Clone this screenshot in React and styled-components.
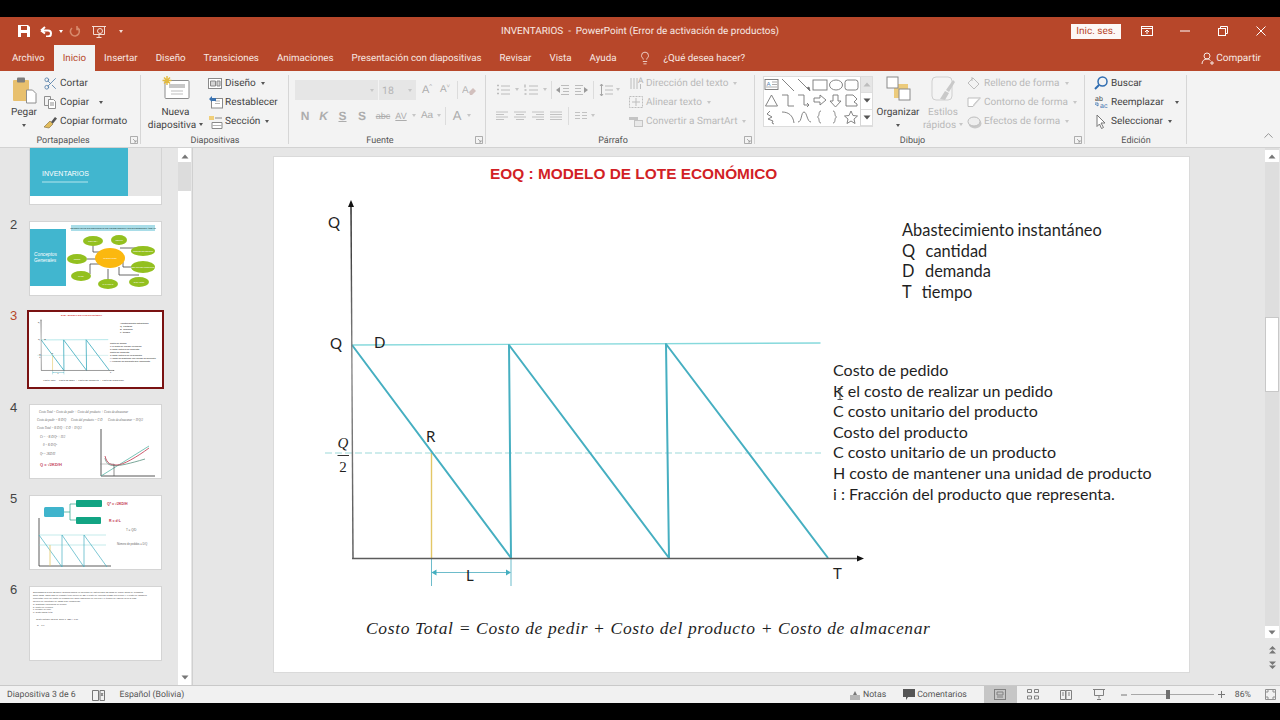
import React from "react";
import styled, { createGlobalStyle } from "styled-components";
import { Scissors, Lightbulb, ChevronUp } from "lucide-react";

const RUST = "#b7472a";
const UI_FONT = 'Roboto, "Noto Sans", sans-serif';

const GlobalStyle = createGlobalStyle`
  html, body { margin: 0; padding: 0; background: #000; }
  body { font-family: ${UI_FONT}; }
  * { box-sizing: border-box; }
  header, nav, section, footer { text-rendering: geometricPrecision; }
`;

const Screen = styled.div`
  width: 1280px;
  height: 720px;
  display: flex;
  flex-direction: column;
  background: #000;
  overflow: hidden;
`;

const Letterbox = styled.div`
  height: 17px;
  flex: none;
  background: #000;
`;

/* title bar */
const TitleBar = styled.header`
  height: 28px;
  flex: none;
  display: grid;
  grid-template-columns: 1fr auto 1fr;
  align-items: center;
  background: ${RUST};
  color: #f7e9e4;
`;

const QuickAccess = styled.div`
  display: flex;
  align-items: center;
  padding-left: 18px;
  gap: 6px;
`;

const WindowTitle = styled.div`
  font-size: 9.95px;
  white-space: pre;
`;

const WindowControls = styled.div`
  display: flex;
  align-items: center;
  justify-content: flex-end;
`;

const SignIn = styled.div`
  width: 50px;
  height: 15px;
  margin-right: 7px;
  background: #fdf8f6;
  color: ${RUST};
  font-size: 10px;
  line-height: 15px;
  text-align: center;
`;

const WinButton = styled.div`
  width: 38px;
  display: flex;
  justify-content: center;
`;

/* tabs */
const TabRow = styled.nav`
  height: 26px;
  flex: none;
  display: flex;
  align-items: flex-end;
  padding-left: 3px;
  background: ${RUST};
`;

const Tab = styled.div`
  height: 26px;
  padding: 0 9px;
  font-size: 9.75px;
  line-height: 27px;
  white-space: nowrap;
  color: ${(p) => (p.$active ? RUST : "#f7e9e4")};
  background: ${(p) => (p.$active ? "#f3f3f3" : "transparent")};
`;

const TellMe = styled.div`
  display: flex;
  align-items: center;
  height: 26px;
  margin-left: 13px;
  gap: 3px;
  font-size: 9.75px;
  color: #f7e9e4;
`;

const Share = styled.div`
  margin-left: auto;
  margin-right: 19px;
  height: 26px;
  display: flex;
  align-items: center;
  gap: 2px;
  font-size: 10px;
  color: #f7e9e4;
`;

/* ribbon */
const Ribbon = styled.section`
  height: 77px;
  flex: none;
  display: flex;
  position: relative;
  background: #f3f3f3;
  border-bottom: 1px solid #d2d2d2;
  color: #444;
`;

const Group = styled.div`
  width: ${(p) => p.$w}px;
  flex: none;
  display: flex;
  flex-direction: column;
  position: relative;
  margin-top: 2.5px;

  &::after {
    content: "";
    position: absolute;
    right: 0;
    top: 1px;
    bottom: 3px;
    width: 1px;
    background: #d6d6d6;
  }
`;

const GroupBody = styled.div`
  flex: 1;
  display: flex;
  padding-left: ${(p) => p.$pad || 0}px;
  gap: ${(p) => p.$gap || 0}px;
`;

const GroupLabel = styled.div`
  height: 13px;
  position: relative;
  padding-right: ${(p) => (p.$launch ? 15 : 0)}px;
  font-size: 9px;
  line-height: 14px;
  text-align: center;
  color: #555;
`;

const Launcher = styled.svg`
  position: absolute;
  right: 3px;
  top: 2px;
`;

const LargeButton = styled.div`
  width: ${(p) => p.$w}px;
  flex: none;
  display: flex;
  flex-direction: column;
  align-items: center;
  font-size: 10px;
  line-height: 13px;
  white-space: nowrap;
  color: ${(p) => (p.$off ? "#b9b9b9" : "#444")};
`;

const LargeIcon = styled.div`
  height: 32px;
  padding-top: 2px;
  display: flex;
  align-items: flex-start;
  justify-content: center;
`;

const Stack = styled.div`
  display: flex;
  flex-direction: column;
  width: ${(p) => (p.$w ? `${p.$w}px` : "auto")};
  margin-left: ${(p) => p.$left || 0}px;
  flex: none;
`;

const SmallButton = styled.div`
  height: 19.3px;
  display: flex;
  align-items: center;
  gap: 2px;
  font-size: 10px;
  white-space: nowrap;
  color: ${(p) => (p.$off ? "#b9b9b9" : "#444")};
`;

const IconSlot = styled.span`
  width: ${(p) => p.$w || 16}px;
  flex: none;
  display: flex;
  justify-content: center;
`;

const Caret = styled.span`
  display: inline-block;
  flex: none;
  width: 0;
  height: 0;
  margin-left: ${(p) => p.$gap ?? 3}px;
  margin-top: ${(p) => p.$top || 0}px;
  vertical-align: middle;
  border-left: 2.5px solid transparent;
  border-right: 2.5px solid transparent;
  border-top: 3px solid ${(p) => p.$color || (p.$off ? "#c6c6c6" : "#555")};
`;

const ComboRow = styled.div`
  display: flex;
  align-items: center;
  height: 28px;
  padding-top: 5px;
`;

const Combo = styled.div`
  width: ${(p) => p.$w}px;
  height: 20px;
  display: flex;
  align-items: center;
  justify-content: space-between;
  padding: 0 4px 0 3px;
  background: #e6e6e6;
  border-right: 1px solid #f3f3f3;
  color: #b5b5b5;
  font-size: 10.5px;
`;

const ToolRow = styled.div`
  display: flex;
  align-items: center;
  height: ${(p) => p.$h || 22}px;
  margin-top: ${(p) => p.$top || 0}px;
  color: #b0b0b0;
`;

const Tool = styled.span`
  width: ${(p) => p.$w}px;
  flex: none;
  text-align: center;
  font-family: "Liberation Sans", sans-serif;
  font-size: ${(p) => p.$size || 12}px;
  font-weight: ${(p) => (p.$bold ? 700 : 400)};
  font-style: ${(p) => (p.$italic ? "italic" : "normal")};
  text-decoration: ${(p) => p.$deco || "none"};
  color: #adadad;
`;

const ToolMark = styled.sup`
  font-size: 6px;
`;

const ToolDivider = styled.span`
  width: 1px;
  height: 18px;
  flex: none;
  margin: 0 ${(p) => p.$m || 5}px;
  background: #dcdcdc;
`;

const ToolSpace = styled.span`
  width: ${(p) => p.$w}px;
  flex: none;
`;

const Collapse = styled.div`
  position: absolute;
  right: 4px;
  bottom: 0;
  color: #777;
`;

const Gallery = styled.div`
  width: 110px;
  height: 51px;
  margin-top: 2.5px;
  display: flex;
  flex: none;
  background: #fff;
  border: 1px solid #dcdcdc;
`;

const GalleryScroll = styled.div`
  width: 12px;
  margin-left: auto;
  display: flex;
  flex-direction: column;
  border-left: 1px solid #d6d6d6;
`;

const GalleryStep = styled.div`
  flex: 1;
  display: flex;
  align-items: center;
  justify-content: center;
  background: ${(p) => (p.$off ? "#e6e6e6" : "#fff")};
  border-bottom: 1px solid #dedede;
`;

/* workspace */
const Workspace = styled.main`
  flex: 1;
  min-height: 0;
  display: flex;
  background: #e6e6e6;
`;

const ThumbPane = styled.aside`
  width: 178px;
  flex: none;
  overflow: hidden;
`;

const ThumbList = styled.div`
  display: flex;
  flex-direction: column;
  gap: 18.4px;
  margin-top: -17.5px;
`;

const ThumbRow = styled.div`
  display: flex;
  height: 73px;
  padding-left: 10px;
`;

const ThumbNumber = styled.div`
  width: 20px;
  height: 16px;
  margin-top: -5px;
  font-size: 13px;
  line-height: 16px;
  font-family: "Liberation Sans", sans-serif;
  color: ${(p) => (p.$on ? RUST : "#444")};
`;

const Thumb = styled.div`
  width: 131px;
  height: 73px;
  position: relative;
  overflow: hidden;
  background: #fff;
  box-shadow: 0 0 0 1px #d4d4d4;
`;

const ThumbSelected = styled(Thumb)`
  box-shadow: 0 0 0 1px #fff, 0 0 0 3px #7a1212;
`;

const ThumbScale = styled.div`
  width: 915px;
  height: 515px;
  transform: scale(0.1432);
  transform-origin: 0 0;
`;

const ThumbArt = styled.svg`
  display: block;
  font-family: "Liberation Sans", sans-serif;
`;

const VBar = styled.div`
  width: ${(p) => p.$w || 13}px;
  flex: none;
  display: flex;
  flex-direction: column;
  padding-top: 2px;
  background: ${(p) => p.$track};
`;

const VButton = styled.div`
  height: 12px;
  flex: none;
  margin-bottom: ${(p) => p.$bottom || 0}px;
  display: flex;
  align-items: center;
  justify-content: center;
  background: ${(p) => p.$bg || "#fff"};
`;

const VSpace = styled.div`
  height: ${(p) => p.$h}px;
  flex: ${(p) => (p.$h ? "none" : 1)};
  background: ${(p) => p.$bg || "transparent"};
  border: ${(p) => p.$line || "none"};
`;

const PaneGap = styled.div`
  width: ${(p) => p.$w || 2}px;
  flex: none;
  border-right: ${(p) => (p.$line ? "1px solid #d0d0d0" : "none")};
`;

const Editor = styled.div`
  flex: 1;
  padding: 9px 0 0 81px;
`;

const Slide = styled.div`
  width: 915px;
  height: 515px;
  position: relative;
  background: #fff;
  color: #1f1f1f;
`;

const SlideFrame = styled(Slide)`
  box-shadow: 0 0 0 1px #dadada;
`;

const SlideCanvas = styled.svg`
  position: absolute;
  left: 0;
  top: 0;
  font-family: Lato, sans-serif;
`;

const SlideHeading = styled.div`
  position: absolute;
  left: 216px;
  top: 7px;
  font-family: "Liberation Sans", sans-serif;
  font-size: 15.4px;
  line-height: 20px;
  font-weight: 700;
  white-space: nowrap;
  color: #d21f26;
`;

const NoteBlock = styled.div`
  position: absolute;
  left: ${(p) => p.$x}px;
  top: ${(p) => p.$y}px;
  font-family: Lato, sans-serif;
  font-size: ${(p) => p.$size}px;
  line-height: 20.6px;
  word-spacing: ${(p) => p.$words || 0}px;
  white-space: pre;
`;

const Formula = styled.div`
  position: absolute;
  left: 92px;
  top: 460px;
  font-family: "Liberation Serif", serif;
  font-style: italic;
  font-size: 17.5px;
  line-height: 22px;
  letter-spacing: 0.64px;
  white-space: pre;
`;

const TextCursor = styled.svg`
  position: absolute;
  left: 562px;
  top: 231px;
`;

/* status bar */
const StatusBar = styled.footer`
  height: 18px;
  flex: none;
  display: flex;
  align-items: center;
  padding-left: 7px;
  background: #f1f1f1;
  border-top: 1px solid #c9c9c9;
  color: #555;
  font-size: 8.7px;
  white-space: nowrap;
`;

const StatusItem = styled.div`
  display: flex;
  align-items: center;
  gap: ${(p) => p.$gap || 0}px;
  margin-left: ${(p) => p.$left || 0}px;
`;

const StatusRight = styled.div`
  margin-left: auto;
  margin-right: 4px;
  display: flex;
  align-items: center;
  height: 100%;
`;

const ViewButton = styled.div`
  width: ${(p) => p.$w}px;
  height: 17px;
  margin-left: ${(p) => p.$left || 0}px;
  display: flex;
  align-items: center;
  justify-content: center;
  background: ${(p) => (p.$on ? "#c6c6c6" : "transparent")};
`;

const ZoomTrack = styled.div`
  width: 83px;
  height: 1px;
  position: relative;
  margin: 0 4px;
  background: #a8a8a8;
`;

const ZoomThumb = styled.span`
  position: absolute;
  left: 35px;
  top: -4px;
  width: 4px;
  height: 9px;
  background: #707070;
`;

const Icon = ({ w = 16, h = 16, vb, children, ...rest }) => (
  <svg width={w} height={h} viewBox={vb || `0 0 ${w} ${h}`} fill="none" {...rest}>
    {children}
  </svg>
);

const GroupTitle = ({ children, launch }) => (
  <GroupLabel $launch={launch}>
    {children}
    {launch && (
      <Launcher width="8" height="8" viewBox="0 0 8 8" fill="none" stroke="#9a9a9a" strokeWidth="0.8">
        <path d="M.5.5h7v7h-7zM3 3l3 3M6 4v2H4" />
      </Launcher>
    )}
  </GroupLabel>
);

const Paste = () => (
  <Icon w={25} h={28}>
    <rect x="1" y="4" width="16" height="21" rx="1" fill="#e8c06e" />
    <rect x="5" y="1.500" width="8" height="5" rx="1" fill="#7d7d7d" />
    <path d="M14.500 14h6l3.500 3.500v9.500h-9.500z" fill="#fff" stroke="#8e8e8e" />
  </Icon>
);

const NewSlide = () => (
  <Icon w={28} h={24}>
    <rect x="3" y="4.500" width="24" height="18" rx="1" fill="#fff" stroke="#8c8c8c" />
    <rect x="7" y="8" width="16" height="4" fill="#c7c7c7" />
    <path d="M9 15h12M9 18h12" stroke="#bdbdbd" />
    <path d="M5 0v9M.5 4.500h9M2 1.500l6 6M8 1.500l-6 6" stroke="#e2b93f" strokeWidth="1.400" />
  </Icon>
);

const CopyIcon = () => (
  <Icon w={14} h={14} stroke="#8f8f8f">
    <path d="M1.500 1.500h6v9h-6z" fill="#f3f3f3" />
    <path d="M5.500 4.500h5l2 2v7h-7z" fill="#fff" />
    <path d="M7 8h4M7 10h4" />
  </Icon>
);

const Painter = () => (
  <Icon w={15} h={14}>
    <path d="M1 12l6-6 3 3-4 4z" fill="#e2bc5c" stroke="#7d6a3a" strokeWidth=".6" />
    <path d="M8 7l4-5 2 1.500-4 5z" fill="#555" />
  </Icon>
);

const LayoutIcon = () => (
  <Icon w={14} h={14} stroke="#8a8a8a">
    <rect x=".5" y="2.500" width="13" height="10" fill="#fff" />
    <path d="M2.500 5h5v5h-5z M9 5h3v5H9z" fill="#d6d6d6" />
  </Icon>
);

const ResetIcon = () => (
  <Icon w={15} h={14}>
    <rect x="3.500" y="3.500" width="11" height="9.500" fill="#fff" stroke="#8a8a8a" />
    <path d="M7 6h5M7 8.500h5" stroke="#b5b5b5" />
    <path d="M1 4l3-3v2h4v3H4v1z" fill="#3a72b0" />
  </Icon>
);

const SectionIcon = () => (
  <Icon w={15} h={14}>
    <rect x="1" y="1" width="5" height="4" fill="#f0cf7a" />
    <path d="M7 3h7M4 7.500h10v6H4z" stroke="#8a8a8a" fill="#fff" />
    <path d="M4 10.500h10" stroke="#b5b5b5" />
  </Icon>
);

const ListIcon = ({ numbered }) => (
  <Icon w={14} h={12} stroke="#bcbcbc">
    <path d="M5 2h9M5 6h9M5 10h9" />
    <path d={numbered ? "M1 .5v3M.5 6h2M.5 10h2" : "M1 1.500h2M1 5.500h2M1 9.500h2"} strokeWidth="1.400" />
  </Icon>
);

const IndentIcon = ({ flip }) => (
  <Icon w={13} h={12} stroke="#bcbcbc" style={flip ? { transform: "scaleX(-1)" } : undefined}>
    <path d="M5 1.500h8M7 4.500h6M7 7.500h6M5 10.500h8" />
    <path d="M0 6l4-3v6z" fill="#9a9a9a" stroke="none" />
  </Icon>
);

const SpacingIcon = () => (
  <Icon w={14} h={14} stroke="#bcbcbc">
    <path d="M6 3h8M6 7h8M6 11h8" />
    <path d="M2.500 1v12M1 3l1.500-2L4 3M1 11l1.500 2L4 11" stroke="#a5a5a5" />
  </Icon>
);

const AlignIcon = ({ d }) => (
  <Icon w={12} h={10} stroke="#c2c2c2">
    <path d={d} />
  </Icon>
);

const ColumnsIcon = () => (
  <Icon w={12} h={10} stroke="#c2c2c2">
    <path d="M0 1.500h5M0 4.500h5M0 7.500h5M7 1.500h5M7 4.500h5M7 7.500h5" />
  </Icon>
);

const DirectionIcon = () => (
  <Icon w={15} h={16}>
    <path d="M2 3v11M5 3v11M8 3v11" stroke="#bcbcbc" />
    <text x="9" y="8" fontSize="8" fill="#b0b0b0" fontFamily="Liberation Sans">A</text>
    <path d="M11.500 9v5" stroke="#bcbcbc" />
  </Icon>
);

const AlignTextIcon = () => (
  <Icon w={15} h={14} stroke="#bdbdbd">
    <rect x=".5" y="1.500" width="13" height="11" strokeDasharray="2 1" />
    <path d="M3 7h8M7 3v8" />
  </Icon>
);

const SmartArtIcon = () => (
  <Icon w={15} h={14}>
    <path d="M0 2h9v3H0zM5 5h9v7H5z" fill="#c4c4c4" />
    <rect x="6" y="6" width="7" height="5" fill="#e9e9e9" />
  </Icon>
);

const ClearFormat = () => (
  <Icon w={14} h={14}>
    <text x="0" y="10" fontSize="10" fill="#b5b5b5" fontFamily="Liberation Sans">A</text>
    <path d="M7 9l4-4 3 3-4 4H8z" fill="#d2c0bd" />
  </Icon>
);

const ShapesGrid = () => (
  <Icon w={96} h={49} stroke="#777" strokeWidth="0.9">
    <g transform="translate(0 1)">
      <rect x="1" y="1.500" width="13" height="10" />
      <text x="2.500" y="8" fontSize="6" fill="#4a7ab0" stroke="none" fontFamily="Liberation Sans">A</text>
      <path d="M8 4h5M8 6.500h5M2 9h11" strokeWidth=".6" />
      <path d="M18 1l12 12M34 1l11 11" />
      <path d="M43 10l3 3-1-4z" fill="#666" />
      <rect x="49" y="2" width="14" height="10" />
      <ellipse cx="72" cy="7" rx="6.500" ry="5" />
      <rect x="81" y="2" width="13" height="10" rx="2.500" />
    </g>
    <g transform="translate(0 17)">
      <path d="M7.500 1l6 11h-12zM18 1h6v11h6M34 1h6v10h5M43 9l2 2-2 2" />
      <path d="M50 4h6V1l6 5-6 5V8h-6zM69 1h5v6h3l-5.500 6-5.500-6h3zM82 12V1h7l4 4-3 3 3 2v2z" />
    </g>
    <g transform="translate(0 33)">
      <path d="M6 1L3 4l5 3-4 2 5 2-1 2 2 1" />
      <path d="M18 2c6 0 11 3 12 11M34 12c4 0 3-10 6-10s3 10 7 10" />
      <path d="M57 1c-3 0-1 5-3.500 6 2.500 1 .5 6 3.500 6M69 1c3 0 1 5 3.500 6-2.500 1-.5 6-3.500 6" />
      <path d="M87 1l2 4.500 4.500.5-3.500 3 1 4.500-4-2.500-4 2.500 1-4.500-3.500-3 4.500-.5z" />
    </g>
  </Icon>
);

const Arrange = () => (
  <Icon w={25} h={25}>
    <rect x="8" y="8" width="14" height="14" fill="#eccb7c" />
    <rect x="1" y="1" width="11" height="11" fill="#fff" stroke="#8a8a8a" />
    <rect x="13" y="13" width="11" height="11" fill="#fff" stroke="#8a8a8a" />
  </Icon>
);

const QuickStyles = () => (
  <Icon w={24} h={26}>
    <rect x="1" y="1" width="20" height="23" rx="4" fill="#f4f4f4" stroke="#cfcfcf" />
    <path d="M9 23l5-8 4 2-4 7zM15 14l7-10 2 2-6 10z" fill="#c9c9c9" />
  </Icon>
);

const FillIcon = () => (
  <Icon w={14} h={14} stroke="#bdbdbd">
    <path d="M6 2l6 6-5 5-6-6z" />
    <path d="M5 1v4" />
  </Icon>
);

const OutlineIcon = () => (
  <Icon w={15} h={14}>
    <path d="M1 3h12L9 7l-3 4.500H1z" stroke="#bdbdbd" fill="#fff" />
    <path d="M6 10l7-8 1 1-7 8z" fill="#cfcfcf" />
  </Icon>
);

const EffectIcon = () => (
  <Icon w={15} h={14}>
    <ellipse cx="8" cy="8.500" rx="6.500" ry="5" fill="#c9c9c9" />
    <ellipse cx="7" cy="6.500" rx="6" ry="4.500" fill="#eeeeee" stroke="#bdbdbd" />
  </Icon>
);

const FindIcon = () => (
  <Icon w={14} h={14} stroke="#2f6db1" strokeWidth="1.500">
    <circle cx="8.500" cy="5.500" r="4.500" />
    <path d="M5 9l-4 4" strokeWidth="2" />
  </Icon>
);

const ReplaceIcon = () => (
  <Icon w={15} h={14}>
    <text x="1" y="6" fontSize="7" fill="#444" fontFamily="Liberation Sans">ab</text>
    <text x="6" y="13" fontSize="7" fill="#3a72b0" fontFamily="Liberation Sans">ac</text>
    <path d="M1 8h3v3M4 11L1 9" stroke="#3a72b0" strokeWidth=".8" />
  </Icon>
);

const SelectIcon = () => (
  <Icon w={14} h={15} stroke="#777">
    <path d="M3 1l8 8H7l2.500 4.500-2 1L5.500 10 3 12.500z" fill="#fff" />
  </Icon>
);

const UpTriangle = ({ down, color = "#777" }) => (
  <Icon w={8} h={5} style={down ? { transform: "rotate(180deg)" } : undefined}>
    <path d="M4 .5L7.500 4.500H.5z" fill={color} />
  </Icon>
);

const PageJump = ({ down }) => (
  <Icon w={9} h={9} style={down ? { transform: "rotate(180deg)" } : undefined}>
    <path d="M4.500 0L8 3.500H1zM4.500 4L8 7.500H1z" fill="#777" />
  </Icon>
);

// k thickens the lines for the small copy in the thumbnail pane
const EoqChart = ({ k = 1 }) => (
  <SlideCanvas width="915" height="515" viewBox="274 157 915 515">
    <defs>
      <linearGradient id={`axis${k}`} x1="0" y1="0" x2="0" y2="1">
        <stop offset="0" stopColor="#222" />
        <stop offset="0.45" stopColor="#8a8a8a" />
        <stop offset="1" stopColor="#555" />
      </linearGradient>
    </defs>
    <path d="M352 345L820.500 343" stroke="#86d9dc" strokeWidth={1.4 * k} />
    <path d="M325 453H821" stroke="#bfe6e6" strokeWidth={1.4 * k} strokeDasharray={k > 1 ? undefined : "7 3"} />
    <path d="M431.500 453V558" stroke="#e3c766" strokeWidth={1.4 * k} />
    <path d="M431.500 558V586M511 558V586" stroke="#6dbccb" strokeWidth={k} />
    <path d="M434 572.500H509" stroke="#6dbccb" strokeWidth={1.2 * k} />
    <path d="M431.500 572.500l5-3v6zM511 572.500l-5-3v6z" fill="#44afc0" />
    <path
      d="M352 345L511 558L509 345L669 558L666 344L828 558"
      stroke="#46afc1"
      strokeWidth={2 * k}
      strokeLinejoin="round"
      fill="none"
    />
    <path d="M351 206L353 558" stroke={`url(#axis${k})`} strokeWidth={1.4 * k} />
    <path d="M351 200l-3 7h6z" fill="#111" />
    <path d="M352 558.500H858" stroke="#5c5c5c" strokeWidth={1.4 * k} />
    <path d="M864 558.500l-7-3v6z" fill="#111" />
    <g fontSize="15" fill="#1f1f1f">
      <text x="328" y="228">Q</text>
      <text x="330" y="349">Q</text>
      <text x="374" y="348">D</text>
      <text x="426" y="442">R</text>
      <text x="466" y="581">L</text>
      <text x="833" y="579">T</text>
    </g>
    <g fontFamily="Liberation Serif" fontSize="15" fill="#1f1f1f" textAnchor="middle">
      <text x="343" y="448" fontStyle="italic">Q</text>
      <path d="M337.500 455.500H349" stroke="#333" strokeWidth="1" />
      <text x="343" y="472">2</text>
    </g>
  </SlideCanvas>
);

const SlideBody = ({ live }) => (
  <>
    <EoqChart k={live ? 1 : 3} />
    <SlideHeading>EOQ : MODELO DE LOTE ECONÓMICO</SlideHeading>
    <NoteBlock $x={628} $y={63} $size={16.4} $words={-0.7}>
      {"Abastecimiento instantáneo\nQ   cantidad\nD   demanda\nT   tiempo"}
    </NoteBlock>
    <NoteBlock $x={559} $y={203} $size={16.05}>
      {"Costo de pedido\nK el costo de realizar un pedido\nC costo unitario del producto\nCosto del producto\nC costo unitario de un producto\nH costo de mantener una unidad de producto\ni : Fracción del producto que representa."}
    </NoteBlock>
    <Formula>Costo Total = Costo de pedir + Costo del producto + Costo de almacenar</Formula>
    {live && (
      <TextCursor width="8" height="12" viewBox="0 0 8 12" fill="none" stroke="#333" strokeWidth=".9">
        <path d="M1.500 .5h5M4 .5v11M1.500 11.500h5" />
      </TextCursor>
    )}
  </>
);

const ThumbTitle = () => (
  <ThumbArt width="131" height="73" viewBox="0 0 131 73">
    <rect width="131" height="73" fill="#fff" />
    <rect x="98" width="33" height="65" fill="#e6e6e6" />
    <rect width="98" height="65" fill="#41b6cf" />
    <text x="12" y="45" fontSize="7" fill="#fff">INVENTARIOS</text>
    <path d="M12 51H58" stroke="#b6e6ee" strokeWidth="1.200" />
  </ThumbArt>
);

const mindNodes = [
  [63, 19, 10, 5, "DEMANDA"],
  [89, 18, 8, 5, "TIEMPO"],
  [113, 29, 12, 5, "COSTOS DE PEDIDOS"],
  [47, 37, 10, 5, "COSTO"],
  [113, 45, 12, 6, "ESTADO DEL PRODUCTO"],
  [51, 54, 10, 5, "NIVEL"],
  [78, 62, 10, 5, "CAPACIDAD"],
  [109, 60, 10, 5, "SITUACIÓN"],
];

const ThumbMindMap = () => (
  <ThumbArt width="131" height="73" viewBox="0 0 131 73">
    <rect x="41" y="3" width="84" height="6" fill="#a9dde8" />
    <text x="83" y="7" fontSize="2.400" fontWeight="700" fill="#355" textAnchor="middle">
      INVENTARIOS EN RECURSOS DE PERMANENCIA EN DIFERENTES ÁREAS
    </text>
    <rect y="7" width="36" height="57" fill="#41b6cf" />
    <text x="4" y="34" fontSize="4.800" fontStyle="italic" fill="#fff">Conceptos</text>
    <text x="4" y="40" fontSize="4.800" fontStyle="italic" fill="#fff">Generales</text>
    <path
      d="M63 24v6h17M89 23v-3M90 26h23M57 37h12M80 42H60v10M90 40h3v5h20M89 45v8h20M78 47v15"
      stroke="#444"
      strokeWidth=".8"
      fill="none"
    />
    {mindNodes.map(([cx, cy, rx, ry, name]) => (
      <g key={name}>
        <ellipse cx={cx} cy={cy} rx={rx} ry={ry} fill="#93c01f" />
        <text x={cx} y={cy + 0.8} fontSize="1.900" fill="#fff" textAnchor="middle">{name}</text>
      </g>
    ))}
    <ellipse cx="80" cy="36" rx="15" ry="10" fill="#fbb80f" />
    <text x="80" y="37" fontSize="2" fill="#fff" textAnchor="middle">INVENTARIOS</text>
  </ThumbArt>
);

const ThumbCurves = () => (
  <ThumbArt width="131" height="73" viewBox="0 0 131 73" fill="#666">
    <g fontFamily="Liberation Serif" fontStyle="italic" fontSize="3">
      <text x="9" y="8">Costo Total = Costo de pedir + Costo del producto + Costo de almacenar</text>
      <text x="7" y="16">Costo de pedir = K·D/Q</text>
      <text x="41" y="16">Costo del producto = C·D</text>
      <text x="78" y="16">Costo de almacenar = H·Q/2</text>
      <text x="7" y="24">Costo Total = K·D/Q + C·D + H·Q/2</text>
      <text x="10" y="33">Ct = −K·D/Q² + H/2</text>
      <text x="13" y="41">0 = K·D/Q²</text>
      <text x="10" y="50">Q² = 2KD/H</text>
    </g>
    <text x="10" y="61" fontSize="4" fontWeight="700" fill="#c44a5d">Q = √2KD/H</text>
    <path d="M71 24V71H125" stroke="#444" strokeWidth=".9" fill="none" />
    <path d="M71 71L119 41" stroke="#59b5a6" strokeWidth=".8" fill="none" />
    <path d="M75 53c2 10 10 10 40 1" stroke="#59917f" strokeWidth=".8" fill="none" />
    <path d="M75 51c2 8 6 9 12 9s20-8 32-17" stroke="#c44a5d" strokeWidth=".9" fill="none" />
    <path d="M84 59V71" stroke="#444" strokeWidth=".6" />
    <path d="M70 59H84" stroke="#888" strokeWidth=".5" />
  </ThumbArt>
);

const ThumbProcess = () => (
  <ThumbArt width="131" height="73" viewBox="0 0 131 73">
    <rect x="14" y="11" width="20" height="10" rx="1.500" fill="#3fb4cc" />
    <rect x="46" y="4" width="26" height="7" rx="1" fill="#12a483" />
    <rect x="46" y="21" width="25" height="7" rx="1" fill="#12a483" />
    <path d="M34 16h6M40 8v16M40 8h6M40 24h6" stroke="#2aa28a" strokeWidth=".7" fill="none" />
    <text x="77" y="9" fontSize="3.500" fontWeight="700" fill="#c2354a">Q* = √2KD/H</text>
    <text x="79" y="26" fontSize="3.500" fontWeight="700" fill="#c2354a">R = d·L</text>
    <text x="96" y="35" fontSize="3" fill="#666">T = Q/D</text>
    <text x="87" y="49" fontSize="2.600" fill="#666">Número de pedidos = D/Q</text>
    <path d="M9 22V70H81" stroke="#333" strokeWidth=".8" fill="none" />
    <path d="M9 39H76M9 49H76" stroke="#8ad6d6" strokeWidth=".5" />
    <path d="M9 39L32 71V39L54 71V39L77 71" stroke="#46afc1" strokeWidth=".7" fill="none" />
    <path d="M20 49V70" stroke="#e3c766" strokeWidth=".8" />
  </ThumbArt>
);

const ThumbExercise = () => (
  <ThumbArt width="131" height="73" viewBox="0 0 131 73" fill="#333">
    <g fontSize="2.250">
      <text x="3" y="6">Supongamos 8.000 Bermejo Compra discos en mercado de cartón para las cajas de pizza; anual de demanda</text>
      <text x="3" y="9">8000 cajas. Cada caja de formato tiene precio de $2; el costo de ordenar es $20 por pedido y el costo de almacén</text>
      <text x="3" y="12">porcentaje 10% del costo de compra por. 8000 discos 5% de por día y el tiempo de espera es de 5 días.</text>
      <text x="3" y="15">modelo de inventario de cajas debe considerar:</text>
      <text x="3" y="18">a. Cantidad económica de pedido</text>
      <text x="3" y="20.500">b. Punto de reorden</text>
      <text x="3" y="23">c. Tiempo de ciclo</text>
      <text x="3" y="25.500">d. Costo anual total</text>
      <text x="6" y="33">Costo unitario: $0.2    D=8000    K=$20    i=0.10</text>
      <text x="7" y="39">R = d·L</text>
    </g>
  </ThumbArt>
);

export default function App() {
  return (
    <Screen>
      <GlobalStyle />
      <Letterbox />

      <TitleBar>
        <QuickAccess>
          <Icon w={12} h={12}>
            <path d="M0 0h10l2 2v10H0z" fill="#fff" />
            <path d="M3 1h6v4H3zM3 8h6v4H3z" fill={RUST} />
          </Icon>
          <Icon w={13} h={12} stroke="#fff" strokeWidth="2" style={{ marginLeft: 4 }}>
            <path d="M1 5.500L5 2M1 5.500L5 8.500M1.500 5.500H8a3 3 0 0 1 0 6H6" />
          </Icon>
          <Caret $gap={0} $color="#fff" />
          <Icon w={12} h={12} stroke="#d78a6d" strokeWidth="1.600">
            <path d="M8 2.500A4.500 4.500 0 1 1 3 3M8 1v3.500H11" />
          </Icon>
          <Icon w={14} h={13} stroke="#f3ddd5" style={{ marginLeft: 5 }}>
            <path d="M0 1.500h14M1.500 1.500v8h11v-8M7 9.500v3M4.500 12.500h5" />
            <circle cx="8" cy="6" r="2.500" />
          </Icon>
          <Caret $gap={7} $color="#f3ddd5" />
        </QuickAccess>
        <WindowTitle>INVENTARIOS  -  PowerPoint (Error de activación de productos)</WindowTitle>
        <WindowControls>
          <SignIn>Inic. ses.</SignIn>
          <WinButton>
            <Icon w={12} h={10} stroke="#fff">
              <rect x=".5" y=".5" width="11" height="9" />
              <path d="M.5 2.500h11" />
              <path d="M6 8V4M4 6l2-2 2 2" />
            </Icon>
          </WinButton>
          <WinButton>
            <Icon w={10} h={2}><path d="M0 1h10" stroke="#fff" /></Icon>
          </WinButton>
          <WinButton>
            <Icon w={10} h={10} stroke="#fff">
              <rect x=".5" y="2.500" width="7" height="7" />
              <path d="M2.500 2.500v-2h7v7h-2" />
            </Icon>
          </WinButton>
          <WinButton>
            <Icon w={10} h={10}><path d="M.5.5l9 9M9.500.5l-9 9" stroke="#fff" /></Icon>
          </WinButton>
        </WindowControls>
      </TitleBar>

      <TabRow>
        <Tab>Archivo</Tab>
        <Tab $active>Inicio</Tab>
        <Tab>Insertar</Tab>
        <Tab>Diseño</Tab>
        <Tab>Transiciones</Tab>
        <Tab>Animaciones</Tab>
        <Tab>Presentación con diapositivas</Tab>
        <Tab>Revisar</Tab>
        <Tab>Vista</Tab>
        <Tab>Ayuda</Tab>
        <TellMe>
          <Lightbulb size={14} strokeWidth={1.400} />
          <ToolSpace $w={5} />
          ¿Qué desea hacer?
        </TellMe>
        <Share>
          <Icon w={13} h={13} stroke="#f7e9e4">
            <circle cx="6" cy="4" r="3" />
            <path d="M1 12c0-3 2-5 5-5 1.500 0 2.500.5 3.500 1.500M9 11h4M11 9v4" />
          </Icon>
          Compartir
        </Share>
      </TabRow>

      <Ribbon>
        <Group $w={141}>
          <GroupBody $pad={8} $gap={2}>
            <LargeButton $w={32}>
              <LargeIcon><Paste /></LargeIcon>
              Pegar
              <Caret $gap={0} $top={5} />
            </LargeButton>
            <Stack>
              <SmallButton>
                <IconSlot><Scissors size={15} color="#4d7ba8" strokeWidth={1.300} /></IconSlot>
                Cortar
              </SmallButton>
              <SmallButton>
                <IconSlot><CopyIcon /></IconSlot>
                Copiar<Caret $gap={8} />
              </SmallButton>
              <SmallButton>
                <IconSlot><Painter /></IconSlot>
                Copiar formato
              </SmallButton>
            </Stack>
          </GroupBody>
          <GroupTitle launch>Portapapeles</GroupTitle>
        </Group>

        <Group $w={148}>
          <GroupBody $pad={6} $gap={3}>
            <LargeButton $w={57}>
              <LargeIcon><NewSlide /></LargeIcon>
              Nueva
              <span>diapositiva<Caret /></span>
            </LargeButton>
            <Stack>
              <SmallButton><IconSlot><LayoutIcon /></IconSlot>Diseño<Caret /></SmallButton>
              <SmallButton><IconSlot><ResetIcon /></IconSlot>Restablecer</SmallButton>
              <SmallButton><IconSlot><SectionIcon /></IconSlot>Sección<Caret /></SmallButton>
            </Stack>
          </GroupBody>
          <GroupTitle>Diapositivas</GroupTitle>
        </Group>

        <Group $w={197}>
          <GroupBody $pad={6}>
            <Stack>
              <ComboRow>
                <Combo $w={84}><span /><Caret $off /></Combo>
                <Combo $w={38}>18<Caret $off /></Combo>
                <Tool $w={20} $size={11}>A<ToolMark>^</ToolMark></Tool>
                <Tool $w={16} $size={10}>A<ToolMark>˅</ToolMark></Tool>
                <ToolDivider $m={4} />
                <ClearFormat />
              </ComboRow>
              <ToolRow $top={3} $h={22}>
                <ToolSpace $w={1} />
                <Tool $w={18} $bold>N</Tool>
                <Tool $w={19} $bold $italic>K</Tool>
                <Tool $w={19} $bold $deco="underline">S</Tool>
                <Tool $w={20} $bold>S</Tool>
                <Tool $w={22} $size={9} $deco="line-through">abc</Tool>
                <Tool $w={14} $size={9} $deco="underline">AV</Tool>
                <Caret $off $gap={4} />
                <ToolSpace $w={1} />
                <Tool $w={20} $size={10}>Aa</Tool>
                <Caret $off $gap={0} />
                <ToolDivider $m={4} />
                <Tool $w={14} $size={13}>A</Tool>
                <Caret $off $gap={3} />
              </ToolRow>
            </Stack>
          </GroupBody>
          <GroupTitle launch>Fuente</GroupTitle>
        </Group>

        <Group $w={269}>
          <GroupBody $pad={10} $gap={6}>
            <Stack $w={126}>
              <ToolRow $top={4} $h={24}>
                <ListIcon /><Caret $off $gap={5} />
                <ToolSpace $w={5} />
                <ListIcon numbered /><Caret $off $gap={5} />
                <ToolDivider $m={4} />
                <IndentIcon />
                <ToolSpace $w={6} />
                <IndentIcon flip />
                <ToolDivider $m={5} />
                <SpacingIcon /><Caret $off $gap={3} />
              </ToolRow>
              <ToolRow $top={3} $h={22}>
                <AlignIcon d="M0 1h12M0 3.500h8M0 6h12M0 8.500h8" />
                <ToolSpace $w={6} />
                <AlignIcon d="M0 1h12M2 3.500h8M0 6h12M2 8.500h8" />
                <ToolSpace $w={6} />
                <AlignIcon d="M0 1h12M4 3.500h8M0 6h12M4 8.500h8" />
                <ToolSpace $w={6} />
                <AlignIcon d="M0 1h12M0 3.500h12M0 6h12M0 8.500h12" />
                <ToolDivider $m={6} />
                <ColumnsIcon /><Caret $off $gap={4} />
              </ToolRow>
            </Stack>
            <Stack>
              <SmallButton $off><IconSlot><DirectionIcon /></IconSlot>Dirección del texto<Caret $off /></SmallButton>
              <SmallButton $off><IconSlot><AlignTextIcon /></IconSlot>Alinear texto<Caret $off /></SmallButton>
              <SmallButton $off><IconSlot><SmartArtIcon /></IconSlot>Convertir a SmartArt<Caret $off /></SmallButton>
            </Stack>
          </GroupBody>
          <GroupTitle launch>Párrafo</GroupTitle>
        </Group>

        <Group $w={330}>
          <GroupBody $pad={8}>
            <Gallery>
              <ShapesGrid />
              <GalleryScroll>
                <GalleryStep $off><UpTriangle color="#bdbdbd" /></GalleryStep>
                <GalleryStep><UpTriangle down color="#555" /></GalleryStep>
                <GalleryStep><UpTriangle down color="#555" /></GalleryStep>
              </GalleryScroll>
            </Gallery>
            <LargeButton $w={50}>
              <LargeIcon><Arrange /></LargeIcon>
              Organizar
              <Caret $gap={0} $top={5} />
            </LargeButton>
            <LargeButton $w={40} $off>
              <LargeIcon><QuickStyles /></LargeIcon>
              Estilos
              <span>rápidos<Caret $off /></span>
            </LargeButton>
            <Stack $left={3}>
              <SmallButton $off><IconSlot><FillIcon /></IconSlot>Relleno de forma<Caret $off /></SmallButton>
              <SmallButton $off><IconSlot><OutlineIcon /></IconSlot>Contorno de forma<Caret $off /></SmallButton>
              <SmallButton $off><IconSlot><EffectIcon /></IconSlot>Efectos de forma<Caret $off /></SmallButton>
            </Stack>
          </GroupBody>
          <GroupTitle launch>Dibujo</GroupTitle>
        </Group>

        <Group $w={102}>
          <GroupBody $pad={8}>
            <Stack>
              <SmallButton><IconSlot><FindIcon /></IconSlot>Buscar</SmallButton>
              <SmallButton><IconSlot><ReplaceIcon /></IconSlot>Reemplazar<Caret $gap={9} /></SmallButton>
              <SmallButton><IconSlot><SelectIcon /></IconSlot>Seleccionar<Caret /></SmallButton>
            </Stack>
          </GroupBody>
          <GroupTitle>Edición</GroupTitle>
        </Group>

        <Collapse><ChevronUp size={15} strokeWidth={1.200} /></Collapse>
      </Ribbon>

      <Workspace>
        <ThumbPane>
          <ThumbList>
            <ThumbRow>
              <ThumbNumber />
              <Thumb><ThumbTitle /></Thumb>
            </ThumbRow>
            <ThumbRow>
              <ThumbNumber>2</ThumbNumber>
              <Thumb><ThumbMindMap /></Thumb>
            </ThumbRow>
            <ThumbRow>
              <ThumbNumber $on>3</ThumbNumber>
              <ThumbSelected>
                <ThumbScale>
                  <Slide><SlideBody /></Slide>
                </ThumbScale>
              </ThumbSelected>
            </ThumbRow>
            <ThumbRow>
              <ThumbNumber>4</ThumbNumber>
              <Thumb><ThumbCurves /></Thumb>
            </ThumbRow>
            <ThumbRow>
              <ThumbNumber>5</ThumbNumber>
              <Thumb><ThumbProcess /></Thumb>
            </ThumbRow>
            <ThumbRow>
              <ThumbNumber>6</ThumbNumber>
              <Thumb><ThumbExercise /></Thumb>
            </ThumbRow>
          </ThumbList>
        </ThumbPane>
        <VBar $track="#fff">
          <VButton><UpTriangle /></VButton>
          <VSpace $h={29} $bg="#dcdcdc" />
          <VSpace />
          <VButton $bottom={2}><UpTriangle down /></VButton>
        </VBar>
        <PaneGap $line />

        <Editor>
          <SlideFrame>
            <SlideBody live />
          </SlideFrame>
        </Editor>

        <VBar $track="#dedede" $w={14}>
          <VButton><UpTriangle /></VButton>
          <VSpace $h={155} />
          <VSpace $h={75} $bg="#fff" $line="1px solid #c8c8c8" />
          <VSpace $h={234} />
          <VButton><UpTriangle down /></VButton>
          <VSpace $h={6} $bg="#e6e6e6" />
          <VButton $bg="#e6e6e6"><PageJump /></VButton>
          <VSpace $h={2} $bg="#e6e6e6" />
          <VButton $bg="#e6e6e6"><PageJump down /></VButton>
          <VSpace $bg="#e6e6e6" />
        </VBar>
        <PaneGap $w={1} />
      </Workspace>

      <StatusBar>
        <StatusItem>Diapositiva 3 de 6</StatusItem>
        <StatusItem $left={16}>
          <Icon w={13} h={12} stroke="#777">
            <path d="M.5 1.500h6v10h-6zM8 1.500h4.500v10H8zM9 4l2 3M11 4L9 7" />
          </Icon>
        </StatusItem>
        <StatusItem $left={15}>Español (Bolivia)</StatusItem>
        <StatusRight>
          <StatusItem $gap={3}>
            <Icon w={10} h={10}>
              <path d="M0 5h10v5H0z" fill="#b5b5b5" />
              <path d="M3 5l2-4 2 4z" fill="#777" />
            </Icon>
            Notas
          </StatusItem>
          <StatusItem $gap={2} $left={17}>
            <Icon w={12} h={11}>
              <path d="M0 0h12v8H5l-2 3V8H0z" fill="#555" />
            </Icon>
            Comentarios
          </StatusItem>
          <ViewButton $w={33} $left={17} $on>
            <Icon w={12} h={11} stroke="#808080">
              <rect x=".5" y=".5" width="11" height="10" />
              <path d="M3 3h6v3H3zM3 8h6" />
            </Icon>
          </ViewButton>
          <ViewButton $w={33}>
            <Icon w={12} h={11} stroke="#808080">
              <path d="M.5.5h4v3h-4zM7.500.5h4v3h-4zM.5 7h4v3h-4zM7.500 7h4v3h-4z" />
            </Icon>
          </ViewButton>
          <ViewButton $w={33}>
            <Icon w={12} h={11} stroke="#808080">
              <path d="M.5 1.500h5v9h-5zM6 1.500h5.500v9H6zM2 4h2M2 6h2M8 4h2M8 6h2" />
            </Icon>
          </ViewButton>
          <ViewButton $w={33}>
            <Icon w={12} h={11} stroke="#808080">
              <path d="M0 .5h12M1.500 .5v6h9v-6M6 6.500v3M4 10.500h4" />
            </Icon>
          </ViewButton>
          <Icon w={6} h={2} style={{ marginLeft: 5 }}><path d="M0 1h6" stroke="#777" /></Icon>
          <ZoomTrack><ZoomThumb /></ZoomTrack>
          <Icon w={7} h={7}><path d="M0 3.500h7M3.500 0v7" stroke="#777" /></Icon>
          <StatusItem $left={10}>86%</StatusItem>
          <ViewButton $w={12} $left={13}>
            <Icon w={11} h={11} stroke="#909090">
              <path d="M.5.5h10v10H.5zM2 4V2h2M7 2h2v2M9 7v2H7M4 9H2V7" />
            </Icon>
          </ViewButton>
        </StatusRight>
      </StatusBar>
      <Letterbox />
    </Screen>
  );
}
